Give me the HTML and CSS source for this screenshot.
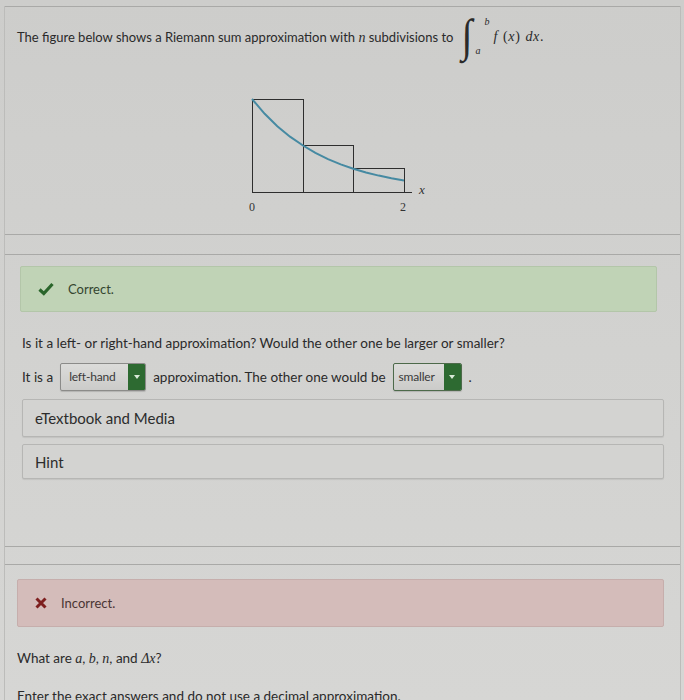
FILE: index.html
```html
<!DOCTYPE html>
<html>
<head>
<meta charset="utf-8">
<link rel="stylesheet" href="styles.css">
</head>
<body>
<div class="outer">
  <section class="sec sec-top">
    <div class="prompt">
      <span class="ptext">The figure below shows a Riemann sum approximation with <i class="m">n</i> subdivisions to</span>
      <span class="integral">
        <span class="sign">∫</span>
        <span class="limits"><span class="ub">b</span><span class="lb">a</span></span>
      </span>
      <span class="fx"><i>f</i> (<i>x</i>) <i>dx</i>.</span>
    </div>
    <svg class="fig" width="200" height="130" viewBox="0 0 200 130">
      <g fill="none" stroke="#2e2e2e" stroke-width="1">
        <rect x="16.5" y="12.5" width="51" height="93"/>
        <rect x="67.5" y="58.5" width="50" height="47"/>
        <rect x="117.5" y="81.5" width="51" height="24"/>
        <line x1="16" y1="105.5" x2="176" y2="105.5"/>
      </g>
      <polyline fill="none" stroke="#468aa2" stroke-width="2" points="16,12 28.7,26.8 41.3,39.2 54,49.7 67,58.5 79.4,65.9 92,72.1 104.7,77.4 117.3,81.75 130,85.5 142.7,88.6 155.4,91.2 168,93.4"/>
      <text x="16" y="124" class="lbl" text-anchor="middle">0</text>
      <text x="167" y="124" class="lbl" text-anchor="middle">2</text>
      <text x="186" y="107" class="lbl xl" text-anchor="middle">x</text>
    </svg>
  </section>

  <section class="sec sec-mid">
    <div class="alert ok">
      <svg class="ico" width="16" height="14" viewBox="0 0 16 14"><path d="M1.5 7.5 L5.8 11.5 L14.5 2" fill="none" stroke="#2a652b" stroke-width="3.2" stroke-linejoin="miter"/></svg>
      <span class="alert-text ok-text">Correct.</span>
    </div>
    <p class="q">Is it a left- or right-hand approximation? Would the other one be larger or smaller?</p>
    <div class="answer">
      <span>It is a</span>
      <span class="select s1"><span class="sel-val">left-hand</span><span class="sel-btn"><span class="tri"></span></span></span>
      <span>approximation. The other one would be</span>
      <span class="select s2"><span class="sel-val">smaller</span><span class="sel-btn"><span class="tri"></span></span></span>
      <span>.</span>
    </div>
    <div class="panel p1">eTextbook and Media</div>
    <div class="panel p2">Hint</div>
  </section>

  <section class="sec sec-bot">
    <div class="alert bad">
      <svg class="ico" width="12" height="12" viewBox="0 0 12 12"><path d="M1.5 1.5 L10.5 10.5 M10.5 1.5 L1.5 10.5" fill="none" stroke="#7e1f1f" stroke-width="3"/></svg>
      <span class="alert-text bad-text">Incorrect.</span>
    </div>
    <p class="q2">What are <i class="m">a</i>, <i class="m">b</i>, <i class="m">n</i>, and <i class="m">Δx</i>?</p>
    <p class="q3">Enter the exact answers and do not use a decimal approximation.</p>
  </section>
</div>
</body>
</html>
```

FILE: styles.css
```css
html, body {
  margin: 0;
  padding: 0;
}
body {
  background: linear-gradient(180deg, #cdcdcb 0%, #d2d2d0 50%, #d6d6d4 100%);
  font-family: Lato, "Noto Sans", sans-serif;
  color: #2a2a2a;
  width: 684px;
  height: 700px;
  overflow: hidden;
}
.outer {
  margin: 6px 0 0 4px;
  width: 675px;
  border-left: 1px solid #bcbcba;
  border-right: 1px solid #bcbcba;
}
.sec {
  border-top: 1px solid #a9a9a7;
  border-bottom: 1px solid #a9a9a7;
  box-sizing: border-box;
}
.sec-top {
  height: 229px;
  padding: 8px 0 0 12px;
}
.prompt {
  display: flex;
  align-items: center;
  height: 44px;
  font-size: 13px;
  letter-spacing: 0;
}
.m {
  font-family: "Liberation Serif", serif;
  font-size: 14px;
}
.integral {
  display: inline-flex;
  align-items: stretch;
  margin-left: 8px;
  font-family: "Liberation Serif", serif;
  height: 42px;
}
.sign {
  font-size: 40px;
  line-height: 40px;
  font-style: italic;
  display: block;
  width: 14px;
  transform: scaleY(1.15);
}
.limits {
  display: flex;
  flex-direction: column;
  justify-content: space-between;
  font-size: 10px;
  font-style: italic;
  line-height: 12px;
  padding: 0 0 1px 0;
}
.ub { margin-left: 9px; }
.lb { margin-left: 0; }
.fx {
  font-family: "Liberation Serif", serif;
  font-size: 14px;
  margin-left: 4px;
  letter-spacing: 0.6px;
  word-spacing: 1px;
}
.fig {
  display: block;
  margin: 28px 0 0 219px;
}
.lbl {
  font-family: "Liberation Serif", serif;
  font-size: 12px;
  fill: #333;
}
.xl { font-style: italic; font-size: 13px; }

.sec-mid {
  margin-top: 19px;
  height: 293px;
  padding-top: 11px;
}
.alert {
  display: flex;
  align-items: center;
  box-sizing: border-box;
  border-radius: 2px;
}
.ok {
  margin: 0 23px 0 15px;
  height: 46px;
  background: #c0d3b6;
  border: 1px solid #b3c6a9;
  padding-left: 17px;
}
.ok .ico { margin-right: 14px; }
.alert-text { font-size: 13px; }
.ok-text { color: #34452f; }
.q {
  margin: 21px 0 0 17px;
  font-size: 13.5px;
  line-height: 20px;
  letter-spacing: 0;
}
.answer {
  display: flex;
  align-items: center;
  margin: 9px 0 0 17px;
  height: 29px;
  font-size: 13.5px;
  gap: 7px;
}
.select {
  display: inline-flex;
  height: 28px;
  box-sizing: border-box;
  border: 1px solid #8b8b89;
  border-radius: 2px;
  background: linear-gradient(180deg, #dcdcda, #cbcbc9);
  overflow: hidden;
  box-shadow: 0 1px 1px rgba(0,0,0,0.15);
}
.s1 { width: 86px; }
.s2 { width: 69px; border-color: #4d6a4a; }
.sel-val {
  flex: 1;
  font-size: 12px;
  line-height: 26px;
  padding-left: 8px;
  color: #3a3a3a;
  letter-spacing: -0.2px;
}
.s2 .sel-val { padding-left: 5px; }
.sel-btn {
  width: 17px;
  background: #2d6a31;
  display: flex;
  align-items: center;
  justify-content: center;
}
.tri {
  width: 0;
  height: 0;
  border-left: 3px solid transparent;
  border-right: 3px solid transparent;
  border-top: 4px solid #d9ead9;
}
.panel {
  box-sizing: border-box;
  margin: 0 16px 0 17px;
  border: 1px solid #b6b6b4;
  border-radius: 2px;
  background: #d3d3d1;
  box-shadow: 0 1px 1px rgba(0,0,0,0.08);
  font-size: 15px;
  padding-left: 12px;
  display: flex;
  align-items: center;
  color: #2c2c2c;
}
.p1 { margin-top: 8px; height: 38px; }
.p2 { margin-top: 7px; height: 35px; }

.sec-bot {
  margin-top: 17px;
  border-bottom: none;
  padding-top: 14px;
  height: 140px;
}
.bad {
  margin: 0 16px 0 12px;
  height: 48px;
  background: #d4bcba;
  border: 1px solid #c6aeac;
  padding-left: 17px;
}
.bad .ico { margin-right: 14px; }
.bad-text { color: #4a3534; }
.q2 {
  margin: 21px 0 0 12px;
  font-size: 13.5px;
  line-height: 20px;
}
.q3 {
  margin: 17px 0 0 12px;
  font-size: 13.5px;
  line-height: 20px;
}
```
